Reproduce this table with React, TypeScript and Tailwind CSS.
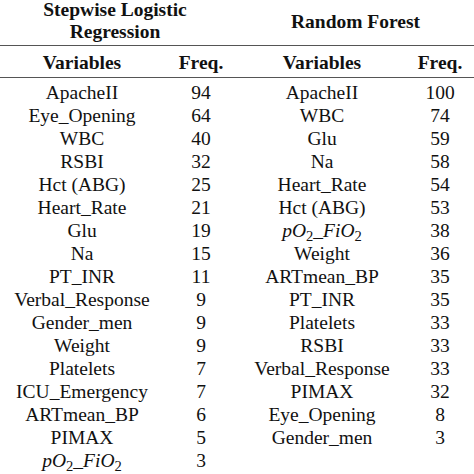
import React from "react";

type Row = { name: React.ReactNode; freq: number };

const PO2 = (
    <>
        <i>pO</i>
        <sub>2</sub>_<i>FiO</i>
        <sub>2</sub>
    </>
);

const LOGISTIC: Row[] = [
    { name: "ApacheII", freq: 94 },
    { name: "Eye_Opening", freq: 64 },
    { name: "WBC", freq: 40 },
    { name: "RSBI", freq: 32 },
    { name: "Hct (ABG)", freq: 25 },
    { name: "Heart_Rate", freq: 21 },
    { name: "Glu", freq: 19 },
    { name: "Na", freq: 15 },
    { name: "PT_INR", freq: 11 },
    { name: "Verbal_Response", freq: 9 },
    { name: "Gender_men", freq: 9 },
    { name: "Weight", freq: 9 },
    { name: "Platelets", freq: 7 },
    { name: "ICU_Emergency", freq: 7 },
    { name: "ARTmean_BP", freq: 6 },
    { name: "PIMAX", freq: 5 },
    { name: PO2, freq: 3 },
];

const FOREST: Row[] = [
    { name: "ApacheII", freq: 100 },
    { name: "WBC", freq: 74 },
    { name: "Glu", freq: 59 },
    { name: "Na", freq: 58 },
    { name: "Heart_Rate", freq: 54 },
    { name: "Hct (ABG)", freq: 53 },
    { name: PO2, freq: 38 },
    { name: "Weight", freq: 36 },
    { name: "ARTmean_BP", freq: 35 },
    { name: "PT_INR", freq: 35 },
    { name: "Platelets", freq: 33 },
    { name: "RSBI", freq: 33 },
    { name: "Verbal_Response", freq: 33 },
    { name: "PIMAX", freq: 32 },
    { name: "Eye_Opening", freq: 8 },
    { name: "Gender_men", freq: 3 },
];

export default function App() {
    return (
        <div className="w-[474px] h-[474px] overflow-hidden bg-white text-[#111] font-['Liberation_Serif',serif] text-[19.5px]">
            {/* Model titles */}
            <div className="grid grid-cols-[230px_237px] gap-[7px] h-[44.5px] font-bold leading-[21.5px] text-center">
                <div className="-mt-[1px]">
                    Stepwise Logistic
                    <br />
                    Regression
                </div>
                <div className="flex items-center justify-center -mt-[2px]">Random Forest</div>
            </div>

            {/* Column headers */}
            <div className="grid grid-cols-[164px_74px_168px_68px] border-y-[1.5px] border-[#555] pt-[6px] pb-[2.5px] leading-[22.5px] font-bold text-center">
                <div>Variables</div>
                <div>Freq.</div>
                <div>Variables</div>
                <div>Freq.</div>
            </div>

            {/* Body */}
            <div className="grid grid-cols-[164px_74px_168px_68px] pt-[3.5px] leading-[23px] text-center">
                {LOGISTIC.map((row, i) => (
                    <React.Fragment key={i}>
                        <div className="h-[23px] whitespace-nowrap">{row.name}</div>
                        <div className="h-[23px]">{row.freq}</div>
                        <div className="h-[23px] whitespace-nowrap">{FOREST[i]?.name}</div>
                        <div className="h-[23px]">{FOREST[i]?.freq}</div>
                    </React.Fragment>
                ))}
            </div>
        </div>
    );
}
